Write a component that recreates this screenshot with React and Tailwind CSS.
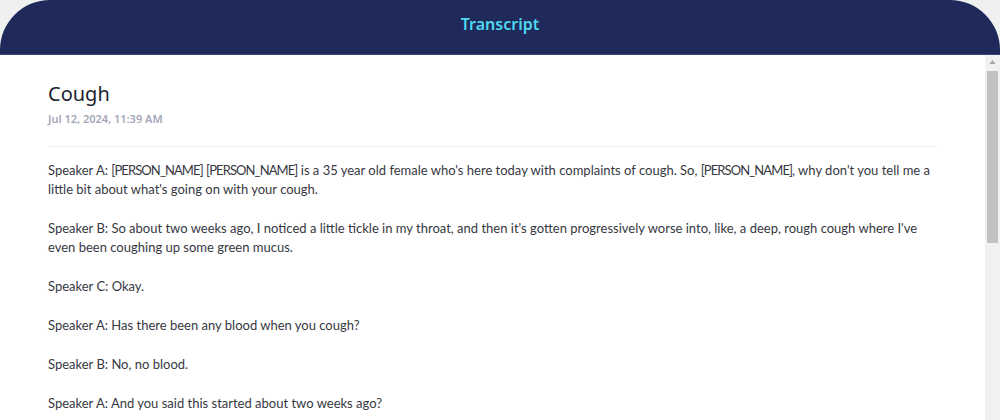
const lines = [
  "Speaker A: [PERSON_NAME] [PERSON_NAME] is a 35 year old female who's here today with complaints of cough. So, [PERSON_NAME], why don't you tell me a little bit about what's going on with your cough.",
  "Speaker B: So about two weeks ago, I noticed a little tickle in my throat, and then it's gotten progressively worse into, like, a deep, rough cough where I've even been coughing up some green mucus.",
  "Speaker C: Okay.",
  "Speaker A: Has there been any blood when you cough?",
  "Speaker B: No, no blood.",
  "Speaker A: And you said this started about two weeks ago?",
  "Speaker B: Yeah, about two weeks ago.",
  "Speaker A: Have you had any fevers or chills?",
  "Speaker B: I felt a little warm a few nights, but I didn't check my temperature.",
];

// placeholders set a touch tighter than the running text
function Line({ text }) {
  const parts = text.split(/(\[PERSON_NAME\])/);
  return parts.map((part, i) =>
    part === "[PERSON_NAME]" ? (
      <span key={i} className="tracking-[-0.9px]">
        {part}
      </span>
    ) : (
      part
    )
  );
}

export default function App() {
  return (
    <div className="h-[420px] w-[1000px] bg-[#f0f0f0] flex flex-col font-['Noto_Sans',sans-serif]">
      {/* header */}
      <div className="h-[55px] shrink-0 bg-[#1f2a5a] rounded-t-[50px] flex items-center justify-center border-b border-[#3a4575]">
        <h1 className="text-[16px] font-semibold text-[#4fd8f0] -mt-[6px]">Transcript</h1>
      </div>
      <div className="flex-1 min-h-0 flex">
        {/* transcript body */}
        <div className="flex-1 overflow-hidden bg-white">
          <div className="px-12 pt-[25px] pb-10">
            <h2 className="text-[20px] leading-[28px] text-[#1c1f2e]">Cough</h2>
            <p className="mt-[3px] text-[11px] font-semibold text-[#a3a7b7]">Jul 12, 2024, 11:39 AM</p>
            <div className="mt-[18px] border-t border-[#eeeff2]" />
            <div className="mt-[14px] flex flex-col gap-5 font-['Lato',sans-serif]">
              {lines.map((line, i) => (
                <p key={i} className="text-[13px] leading-[19px] text-[#36383f]">
                  <Line text={line} />
                </p>
              ))}
            </div>
          </div>
        </div>
        {/* scrollbar */}
        <div className="w-[15px] bg-[#f1f1f1] flex flex-col items-center">
          <svg width="15" height="15" viewBox="0 0 15 15" className="shrink-0">
            <path d="M7.5 5 L10.5 9 L4.5 9 Z" fill="#a3a3a3" />
          </svg>
          <div className="mt-[1px] w-[11px] h-[172px] bg-[#c1c1c1]" />
        </div>
      </div>
    </div>
  );
}
